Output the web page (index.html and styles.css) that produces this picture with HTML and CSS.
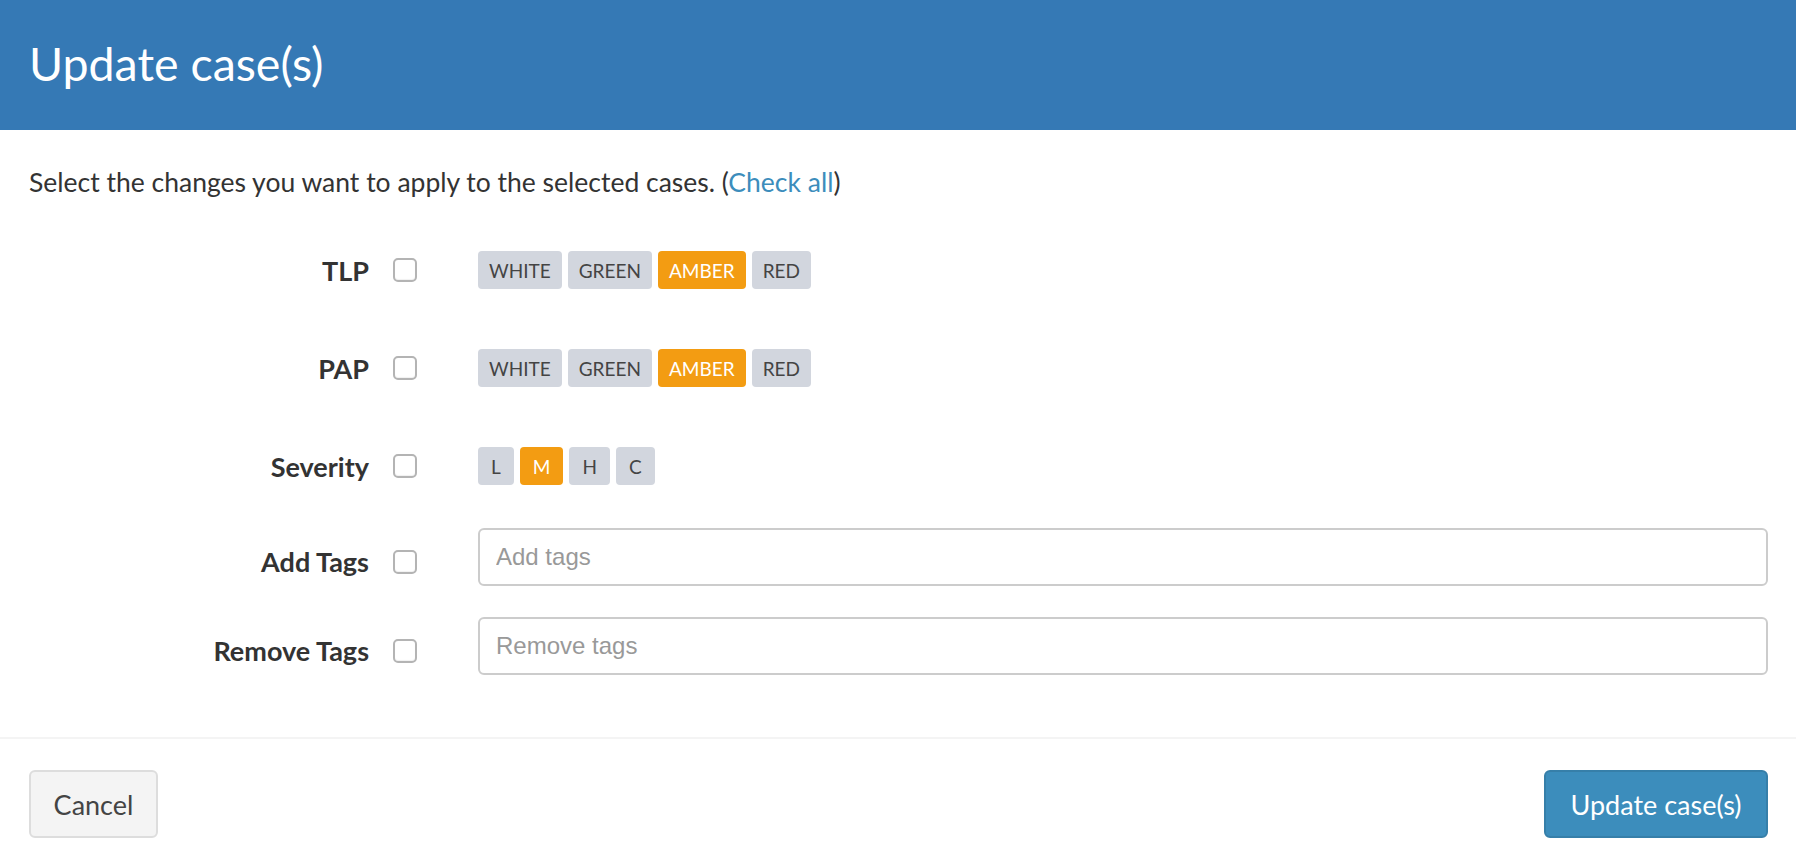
FILE: index.html
```html
<!DOCTYPE html>
<html lang="en">
<head>
<meta charset="utf-8">
<title>Update case(s)</title>
<link rel="stylesheet" href="styles.css">
</head>
<body>
<div class="modal">
  <div class="modal-header">
    <h1 class="modal-title">Update case(s)</h1>
  </div>
  <div class="modal-body">
    <p class="intro">Select the changes you want to apply to the selected cases. (<a href="#" class="link">Check all</a>)</p>

    <div class="form-group">
      <label class="control-label">TLP</label>
      <input type="checkbox" class="cb">
      <div class="field btn-group">
        <span class="tag-btn">WHITE</span>
        <span class="tag-btn">GREEN</span>
        <span class="tag-btn active">AMBER</span>
        <span class="tag-btn">RED</span>
      </div>
    </div>

    <div class="form-group">
      <label class="control-label">PAP</label>
      <input type="checkbox" class="cb">
      <div class="field btn-group">
        <span class="tag-btn">WHITE</span>
        <span class="tag-btn">GREEN</span>
        <span class="tag-btn active">AMBER</span>
        <span class="tag-btn">RED</span>
      </div>
    </div>

    <div class="form-group sev">
      <label class="control-label">Severity</label>
      <input type="checkbox" class="cb">
      <div class="field btn-group letters">
        <span class="tag-btn">L</span>
        <span class="tag-btn active">M</span>
        <span class="tag-btn">H</span>
        <span class="tag-btn">C</span>
      </div>
    </div>

    <div class="form-group tags">
      <label class="control-label">Add Tags</label>
      <input type="checkbox" class="cb">
      <div class="field">
        <input type="text" class="tag-input" placeholder="Add tags">
      </div>
    </div>

    <div class="form-group tags">
      <label class="control-label">Remove Tags</label>
      <input type="checkbox" class="cb">
      <div class="field">
        <input type="text" class="tag-input" placeholder="Remove tags">
      </div>
    </div>
  </div>
  <div class="modal-footer">
    <button class="btn btn-default">Cancel</button>
    <button class="btn btn-primary">Update case(s)</button>
  </div>
</div>
</body>
</html>
```

FILE: styles.css
```css
* { box-sizing: border-box; }

html, body {
  margin: 0;
  padding: 0;
  background: #ffffff;
}

body {
  font-family: Lato, "Open Sans", sans-serif;
  color: #333333;
  width: 1796px;
  height: 862px;
  overflow: hidden;
}

.modal-header {
  height: 130px;
  background: #3579b5;
  display: flex;
  align-items: center;
  padding: 0 29px;
}

.modal-title {
  margin: 0;
  color: #ffffff;
  font-weight: 400;
  font-size: 46.5px;
  line-height: 1;
  padding-bottom: 4px;
}

.modal-body {
  padding: 32px 28px 62px 29px;
  border-bottom: 2px solid #f4f4f4;
}

.intro {
  margin: 0 0 49px 0;
  font-size: 26.5px;
  line-height: 40px;
}

.link {
  color: #3c8dbc;
  text-decoration: none;
}

.form-group {
  display: grid;
  grid-template-columns: 340px 24px 1fr;
  column-gap: 24px;
  align-items: center;
  margin-bottom: 60px;
}

.form-group.sev { margin-bottom: 43px; }
.form-group.tags { margin-bottom: 31px; }
.form-group.tags:last-child { margin-bottom: 0; }

.control-label {
  text-align: right;
  font-weight: 700;
  font-size: 27px;
  color: #333333;
}

.form-group.tags .control-label,
.form-group.tags .cb {
  margin-top: 9px;
}

.cb {
  appearance: none;
  -webkit-appearance: none;
  margin: 0;
  width: 24px;
  height: 24px;
  border: 2px solid #b4b4b4;
  border-radius: 5px;
  background: #ffffff;
  box-shadow: inset 0 -1px 1px rgba(0,0,0,0.06);
}

.field {
  margin-left: 37px;
}

.btn-group {
  display: flex;
  gap: 6px;
}

.tag-btn {
  display: inline-flex;
  align-items: center;
  justify-content: center;
  height: 38px;
  padding: 0 11px;
  font-size: 19px;
  background: #d2d6de;
  color: #444444;
  border-radius: 4px;
}

.letters .tag-btn {
  padding: 0 13px;
}

.tag-btn.active {
  background: #f39c12;
  color: #ffffff;
}

.tag-input {
  display: block;
  width: 100%;
  height: 58px;
  border: 2px solid #cccccc;
  border-radius: 6px;
  padding: 0 16px;
  font-family: "Liberation Sans", Arial, sans-serif;
  font-size: 24px;
  color: #555555;
  background: #ffffff;
  outline: none;
}

.tag-input::placeholder {
  color: #999999;
}

.modal-footer {
  display: flex;
  justify-content: space-between;
  padding: 31px 28px 0 29px;
}

.btn {
  height: 68px;
  font-family: Lato, "Open Sans", sans-serif;
  font-size: 27px;
  border-radius: 6px;
  border: 2px solid transparent;
  cursor: pointer;
}

.btn-default {
  width: 129px;
  background: #f4f4f4;
  border-color: #dddddd;
  color: #444444;
}

.btn-primary {
  width: 224px;
  background: #3c8dbc;
  border-color: #367fa9;
  color: #ffffff;
}
```
